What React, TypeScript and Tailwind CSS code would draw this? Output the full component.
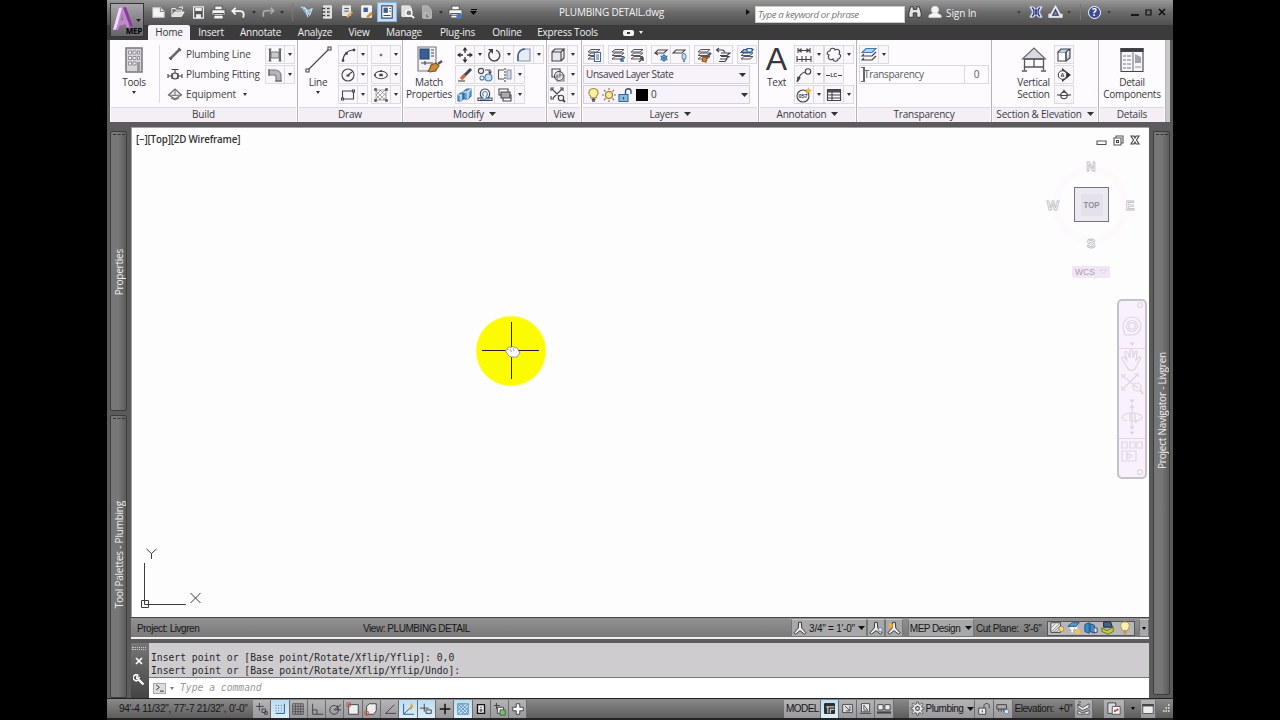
import React from "react";

type Kids = { children?: React.ReactNode };

function Ic({ s = 16, h, vb, children }: Kids & { s?: number; h?: number; vb?: string }) {
  return (
    <svg width={s} height={h ?? s} viewBox={vb ?? "0 0 16 16"} fill="none" stroke="#45434a" strokeWidth="1.1" className="block shrink-0">
      {children}
    </svg>
  );
}

function Caret({ big = false, color = "#333" }: { big?: boolean; color?: string }) {
  return (
    <svg width={big ? 7 : 4} height={big ? 4 : 3} viewBox="0 0 8 4" preserveAspectRatio="none" fill={color} className="block shrink-0">
      <path d="M0 0h8L4 4z" />
    </svg>
  );
}

/* ---------- ribbon icons ---------- */
const duct = <Ic><path d="M3 2v12M13 2v12" stroke="#666" strokeWidth="2" /><path d="M1.500 2h3M1.500 14h3M11.500 2h3M11.500 14h3" stroke="#666" /><path d="M4 5h8v6H4z" fill="#c9c9ce" stroke="#777" /></Ic>;
const elbow = <Ic><path d="M2 3h6c4 0 6 3 6 6v5H9v-4c0-1-1-2-2-2H2z" fill="#b5b4b9" stroke="#777" /><path d="M2 2v7M8 14h7" stroke="#666" /></Ic>;
const arc = <Ic><path d="M3 14C3 8 7 3 14 3" /><path d="M2 12.500h2v2H2zM5.500 5.500h2v2h-2zM13 2h2v2h-2z" fill="#444" strokeWidth=".5" /></Ic>;
const point = <Ic><path d="M7 7h2v2H7z" fill="#777" stroke="#777" strokeWidth=".5" /></Ic>;
const circle = <Ic><circle cx="8" cy="8" r="6" /><path d="M8 8l4-3M7 8h2v1H7z" /></Ic>;
const ellipse = <Ic><ellipse cx="8" cy="8" rx="6.300" ry="3.700" /><path d="M7 7.500h2v1H7zM7 4h2M1 8h2" strokeWidth="1.500" /></Ic>;
const rect = <Ic><path d="M2.500 4h11v8h-11z" /><path d="M1.500 11h2v2h-2zM12.500 3h2v2h-2z" fill="#fff" /></Ic>;
const hatch = <Ic><path d="M3 3h10v10H3zM3 8l5-5M3 12l9-9M6 13l7-7M10 13l3-3M3 4l9 9M3 8l5 5M7 3l6 6" strokeWidth=".6" stroke="#777" /><path d="M1.500 1.500h2v2h-2zM12.500 1.500h2v2h-2zM12.500 12.500h2v2h-2zM1.500 12.500h2v2h-2z" fill="#555" strokeWidth=".5" /></Ic>;
const move = <Ic><path d="M8 1v5M8 10v5M1 8h5M10 8h5" stroke="#333" strokeWidth="1.300" /><path d="M8 0L5.500 3.500h5zM8 16l-2.500-3.500h5zM0 8l3.500-2.500v5zM16 8l-3.500-2.500v5z" fill="#333" stroke="none" /></Ic>;
const rotate = <Ic><path d="M5 4a5.500 5.500 0 1 0 5-.8" strokeWidth="1.400" /><path d="M2 2h5v5z" fill="#444" stroke="none" /></Ic>;
const fillet = <Ic><path d="M2 14V9c0-4 3-7 7-7h5v12z" fill="#e6ebf5" stroke="#8d93a5" /><path d="M2 14V9c0-4 3-7 7-7" stroke="#3d5d94" strokeWidth="1.500" /></Ic>;
const erase = <Ic><path d="M14 2L7 9" stroke="#444" strokeWidth="3" /><path d="M8 8l-4 4" stroke="#cf6b42" strokeWidth="3.500" /><path d="M1 14h7" /></Ic>;
const copy = <Ic><circle cx="4" cy="4" r="2.600" /><circle cx="11.500" cy="10.500" r="3.500" fill="#c7ddf1" stroke="#3f79b0" /><circle cx="5" cy="11" r="2" stroke="#3f79b0" /><path d="M8 3h5v3M11.500 4.500L13 6.500l1.500-2" /></Ic>;
const mirror = <Ic><path d="M7 3H1.500v9H7" stroke="#555" /><path d="M10 3h4v9h-4z" fill="#c9d7e8" stroke="#8a96a8" /><path d="M8 1v14" strokeDasharray="2 1" /></Ic>;
const array3d = <Ic><path d="M1 8l3-2h3v5l-3 3H1zM6 5l4-3h4v7l-3 3H6z" fill="#70a8d4" stroke="#2d6c9e" /><path d="M6 5h5v7M11 5l3-3M1 8h3v6" stroke="#e6f5ff" /></Ic>;
const offset = <Ic><path d="M1 13.500h14V11h-4.500c4-3 2-9-2.500-9s-6.500 6-2.500 9H1z" stroke="#3c4a5a" /><path d="M3 12.300h5.500M8 12h5M6.800 9.500C4.500 7 6 4.500 8 4.500s3.500 2.500 1.200 5V12" stroke="#4186b3" /></Ic>;
const order = <Ic><path d="M2 2h9v6H2zM6 8h8v6H6z" fill="#fff" /><path d="M4 5h9v6H4z" fill="#aaa" /></Ic>;
const cube = <Ic><path d="M2 5h9v9H2zM2 5l3-3h9l-3 3M14 2v9l-3 3" fill="#e8e7eb" /></Ic>;
const overlap = <Ic><path d="M2 2h8v8H2z" /><circle cx="9" cy="9" r="4.500" fill="#dad9e066" /><path d="M7 8h7v6H7z" stroke="#777" /></Ic>;
const zoomExt = <Ic><path d="M2 2l8 8M12 2L3 11M1 4V1h3M10 1h3v3M1 9v3h3" /><circle cx="11" cy="11" r="2.700" fill="#eee" /><path d="M13 13l2 2" strokeWidth="2" /></Ic>;

function Stack({ x }: { x?: React.ReactNode }) {
  return (
    <Ic>
      <path d="M5 2.500h9l-3 2.500H2zM5 6h9l-3 2.500H2zM5 9.500h9l-3 2.500H2z" fill="#f4f3f7" stroke="#56545c" strokeWidth="1" />
      {x}
    </Ic>
  );
}
const lay1 = <Stack x={<><path d="M8.500 5.500h6v9h-6z" fill="#fff" stroke="#46689a" /><path d="M10 8h3M10 10h3M10 12h3" stroke="#46689a" /></>} />;
const lay2 = <Stack x={<path d="M15 10l-4 4M11 11v3h3" stroke="#3a6ea5" strokeWidth="1.400" />} />;
const lay3 = <Stack x={<path d="M10 15l4-4M14 14v-3h-3" stroke="#444" strokeWidth="1.400" />} />;
const freeze = <Ic><path d="M5 3h9l-3 3H2zM2 6l3 2" fill="#f4f3f7" /><path d="M11 7v8M7.500 9l7 4M14.500 9l-7 4" stroke="#3b78b5" strokeWidth="1.200" /><circle cx="11" cy="11" r="2.500" stroke="#3b78b5" /></Ic>;
const off = <Ic><path d="M4 3h9l-3 3H1z" fill="#f4f3f7" /><ellipse cx="12" cy="9.500" rx="2" ry="3" fill="#c6dcf3" stroke="#6a8ab5" /><path d="M12 12v3" stroke="#6a8ab5" strokeWidth="2" /></Ic>;
const layMatch = <Stack x={<><path d="M15 6l-5 5" stroke="#555" strokeWidth="2" /><path d="M7 10l4 1-1 4-4-1z" fill="#c98636" stroke="#9a5c17" /></>} />;
const layPrev = <Ic><path d="M6 6h9l-3 2.500H5M6 9.500h8l-3 2.500H5M12 12l-2 2.500H4M1 3h7l2 2M4 1L1.500 3 4 5" /></Ic>;
const layIso = <Stack x={<><path d="M5 2.500h9l-3 3H2z" fill="#8dbbe4" stroke="#315c8b" /><path d="M8 1.500h5v3.500H8z" fill="#dcebf8" stroke="#315c8b" /></>} />;
const dim = <Ic><path d="M2 1v5M14 1v5M2 3.500h12M1 9v6M6 9v6M10 9v6M15 9v6M1 12.500h14" /><path d="M3 3.500l2-1.500v3zM13 3.500L11 2v3z" fill="#444" /></Ic>;
const cloud = <Ic><path d="M4 4c0-4 5-3 5-1 3-2 6 1 4 4 3 1 1 5-1 5 0 3-5 3-5 0-3 2-6-1-4-4-3-1-2-4 1-4z" /></Ic>;
const leader = <Ic><path d="M2 14c1-5 3-8 7-9" /><circle cx="12" cy="4.500" r="2.700" /><path d="M1 15l1-5 2 1z" fill="#444" /></Ic>;
const labelCurve = (
  <Ic>
    <path d="M0 8.500h4M12 8.500h4" />
    <text x="4.500" y="10.300" fontSize="5" fill="#333" stroke="none" fontFamily="Liberation Sans, sans-serif" fontWeight="bold">LC</text>
  </Ic>
);
const keynote = (
  <Ic>
    <circle cx="7" cy="9" r="6" />
    <text x="2.500" y="11" fontSize="5.500" fill="#333" stroke="none" fontFamily="Liberation Sans, sans-serif" fontWeight="bold">057</text>
    <path d="M12.500 0l1 2.500L16 3l-2 1.500.5 2.500-2-1.500L10 6.500l.5-2.500L9 2.500l2.500-.3z" fill="#e8b441" stroke="none" />
  </Ic>
);
const table = <Ic><path d="M1.500 2.500h13v11h-13zM1.500 8h13M1.500 11h13M6 5v8.500" /><path d="M2 3h12v2H2z" fill="#555" /></Ic>;
const transp = <Ic><path d="M5 1.500h10l-4 4H1z" fill="#a8d3ef" stroke="#3f7ba4" /><path d="M3 7l-2 2h10l4-4M3 11l-2 2h10l4-4" stroke="#444" strokeWidth="1.200" /></Ic>;
const secCube = <Ic><path d="M2 5h8v9H2z" fill="#fff" /><path d="M2 5l3-3h9l-4 3M14 2v9l-4 3" fill="#b5d2ea" /><path d="M10 5V14" /></Ic>;
const secMark = <Ic><path d="M6 1l9 7-9 7V12h3V4H6z" fill="#333" stroke="none" /><circle cx="6.500" cy="8" r="4.200" fill="#fff" /><path d="M5 10l1.500-4L8 10M5.500 9h2" strokeWidth=".9" /></Ic>;
const elevMark = <Ic><path d="M1 8h14" /><path d="M4.500 8L8 3.500 11.500 8z" fill="#333" /><circle cx="8" cy="8.500" r="3.200" fill="#fff" /><path d="M5 8.500h6" /></Ic>;

function Cell({ children, w = "w-[20px]", split = false }: Kids & { w?: string; split?: boolean }) {
  return (
    <div className={`flex h-[19px] ${w} shrink-0 items-center justify-center border border-[#dedae1] bg-[#faf7fb] ${split ? "-ml-px" : ""}`}>
      {children}
    </div>
  );
}
function Drop() {
  return (
    <Cell w="w-[11px]" split>
      <Caret />
    </Cell>
  );
}
function Combo({ children }: Kids) {
  return (
    <div className="flex">
      <Cell>{children}</Cell>
      <Drop />
    </div>
  );
}
function Panel({ w, title, arrow, children }: Kids & { w: string; title: string; arrow?: boolean }) {
  return (
    <section className={`flex ${w} shrink-0 flex-col border-r border-[#b5b2b8] bg-[#fdfbfe]`}>
      <div className="flex h-[67px] pt-[5px]">{children}</div>
      <div className="mx-px flex h-[15px] items-center justify-center gap-[5px] whitespace-nowrap border-t border-[#ddd9e0] bg-[#f3eff5] pb-[2px] text-[10px] tracking-[-0.2px] text-[#3c393f]">
        <span>{title}</span>
        {arrow && <Caret big />}
      </div>
    </section>
  );
}
function Big({ icon, lines, arrow, w }: { icon: React.ReactNode; lines: string[]; arrow?: boolean; w: string }) {
  return (
    <div className={`flex ${w} shrink-0 flex-col items-center text-[10px] leading-[12px] tracking-[-0.25px] text-[#39363c]`}>
      <div className="flex h-[31px] items-center pb-[2px]">{icon}</div>
      {lines.map((l) => (
        <span key={l} className="whitespace-nowrap">{l}</span>
      ))}
      {arrow && <div className="pt-[3px]"><Caret /></div>}
    </div>
  );
}
function BuildRow({ icon, label, arrow }: { icon: React.ReactNode; label: string; arrow?: boolean }) {
  return (
    <div className="flex h-[20px] items-center gap-[3px] whitespace-nowrap text-[10px] tracking-[-0.12px] text-[#434046]">
      {icon}
      <span>{label}</span>
      {arrow && <span className="pl-1"><Caret /></span>}
    </div>
  );
}

function Ribbon() {
  const col = "flex flex-col gap-px";
  return (
    <div className="ml-[3px] flex h-[82px] w-[1060px] bg-[#fdfbfe]">
      <Panel w="w-[188px]" title="Build">
        <Big w="w-[48px]" arrow lines={["Tools"]} icon={
          <Ic s={18} h={26} vb="0 0 18 26"><path d="M1 1h16v24H1z" fill="#d5d4d9" stroke="#77757b" strokeWidth="1.500" /><path d="M3.500 4h3v3h-3zM8 4h3v3H8zM12.500 4h2v3h-2zM3.500 9.500h3v3h-3zM8 9.500h3v3H8zM12.500 9.500h2v3h-2zM3.500 15h3v3h-3zM8 15h3v3H8z" fill="#f8f8fa" stroke="#7c7a80" strokeWidth=".8" /><path d="M12 15h3v9h-3z" fill="#99979d" stroke="none" /></Ic>
        } />
        <div className="ml-px h-[58px] w-px bg-[#dcd8df]" />
        <div className="-mt-px ml-[7px] w-[98px]">
          <BuildRow label="Plumbing Line" icon={<Ic><path d="M3 13L13 3" stroke="#6a686e" strokeWidth="2.500" /><path d="M2 11.500l2.500 2.500M11.500 2l2.500 2.500" stroke="#555" /></Ic>} />
          <BuildRow label="Plumbing Fitting" icon={<Ic><path d="M1 10h14M1 8v4M15 8v4M8 4v4M4.500 3.500h7" /><circle cx="8" cy="10" r="3" fill="#eee" /><path d="M5 7v6M11 7v6" /></Ic>} />
          <BuildRow label="Equipment" arrow icon={<Ic><path d="M1.500 9L8 3l6.500 6-6.500 4z" fill="#eeedf1" stroke="#666" /><path d="M8 3v6.500M1.500 9l6.500.5 6.500-.5M4 12l4 2 4-2" stroke="#777" /></Ic>} />
        </div>
        <div className={col}><Combo>{duct}</Combo><Combo>{elbow}</Combo></div>
      </Panel>
      <Panel w="w-[105px]" title="Draw">
        <Big w="w-[40px]" arrow lines={["Line"]} icon={
          <Ic s={27} h={27} vb="0 0 27 27"><path d="M2.500 24.500L24.500 2.500" /><path d="M1 23h3v3H1zM23 1h3v3h-3z" fill="#fff" /></Ic>
        } />
        <div className={col}><Combo>{arc}</Combo><Combo>{circle}</Combo><Combo>{rect}</Combo></div>
        <div className={`ml-[3px] ${col}`}><Combo>{point}</Combo><Combo>{ellipse}</Combo><Combo>{hatch}</Combo></div>
      </Panel>
      <Panel w="w-[144px]" title="Modify" arrow>
        <Big w="w-[52px]" lines={["Match", "Properties"]} icon={
          <Ic s={27} h={27} vb="0 0 27 27"><path d="M2 1h18v24H2z" fill="#f2f2f6" stroke="#77757b" /><path d="M4 3h9v10H4z" fill="#3b5f92" stroke="#27456f" /><path d="M15 4h3M15 7h3M15 10h3M5 17h12M9 15v4" /><path d="M26 15l-4 3" stroke="#555" strokeWidth="2.500" /><path d="M15 19l5-2 3 3-4 5-5 1-2-1c2-1 2-3 3-6z" fill="#c88a3e" stroke="#8b5317" /></Ic>
        } />
        <div className={col}>
          <div className="flex"><Cell>{move}</Cell><Drop /><Cell split>{rotate}</Cell><Drop /><Cell split w="w-[21px]">{fillet}</Cell><Drop /></div>
          <div className="flex"><Cell>{erase}</Cell><Cell w="w-[21px]" split>{copy}</Cell><Cell w="w-[21px]" split>{mirror}</Cell><Drop /></div>
          <div className="flex"><Cell>{array3d}</Cell><Cell w="w-[21px]" split>{offset}</Cell><Cell w="w-[21px]" split>{order}</Cell><Drop /></div>
        </div>
      </Panel>
      <Panel w="w-[35px]" title="View">
        <div className={`ml-px ${col}`}><Combo>{cube}</Combo><Combo>{overlap}</Combo><Combo>{zoomExt}</Combo></div>
      </Panel>
      <Panel w="w-[177px]" title="Layers" arrow>
        <div className={`ml-px ${col}`}>
          <div className="flex gap-[4px]">
            <Cell w="w-[21px]">{lay1}</Cell>
            <div className="flex"><Cell>{lay2}</Cell><Cell split>{lay3}</Cell></div>
            <div className="flex"><Cell>{freeze}</Cell><Cell split>{off}</Cell></div>
            <div className="flex"><Cell>{layMatch}</Cell><Cell split>{layPrev}</Cell></div>
            <Cell>{layIso}</Cell>
          </div>
          <div className="flex h-[19px] w-[167px] items-center justify-between border border-[#d5d1d9] bg-[#f8f2fa] pl-[2px] pr-[3px] text-[10px] tracking-[-0.4px] text-[#3c393f]">
            <span>Unsaved Layer State</span><Caret big />
          </div>
          <div className="flex h-[19px] w-[167px] items-center border border-[#d5d1d9] bg-[#f8f2fa] pl-[2px] pr-px text-[10px] text-[#3c393f]">
            <Ic s={15}><path d="M5 10C1 6 4 1.500 8 1.500S15 6 11 10v1.500H5z" fill="#fcefa0" stroke="#a38b42" /><path d="M6 13h4M6.500 15h3" strokeWidth="1.500" /></Ic>
            <Ic s={16}><circle cx="8" cy="8" r="3.500" fill="#fae79a" stroke="#927a34" /><path d="M8 1v2M8 13v2M1 8h2M13 8h2M3 3l1.500 1.500M11.500 11.500L13 13M13 3l-1.500 1.500M3 13l1.500-1.500" stroke="#8a743a" /></Ic>
            <Ic s={16}><path d="M2 7.500h9v7H2z" fill="#86bfe3" stroke="#2e6b98" /><path d="M8.500 7V4c0-3 5.500-3 5.500 0v3M6.500 10v2.500" stroke="#2e4f68" strokeWidth="1.300" /></Ic>
            <div className="ml-[3px] h-[12px] w-[12px] bg-black" />
            <span className="ml-[3px] flex-1">0</span><Caret big />
          </div>
        </div>
      </Panel>
      <Panel w="w-[98px]" title="Annotation" arrow>
        <div className="flex w-[35px] shrink-0 flex-col items-center text-[#39363c]">
          <span className="h-[32px] font-['Liberation_Sans',sans-serif] text-[32px] leading-[29px]">A</span>
          <span className="h-[12px] text-[10px] leading-[11px] tracking-[-0.25px]">Text</span>
        </div>
        <div className={col}>
          <div className="flex"><Combo>{dim}</Combo><Combo>{cloud}</Combo></div>
          <div className="flex"><Combo>{leader}</Combo><Cell>{labelCurve}</Cell></div>
          <div className="flex"><Combo>{keynote}</Combo><Combo>{table}</Combo></div>
        </div>
      </Panel>
      <Panel w="w-[135px]" title="Transparency">
        <div className={`ml-[2px] ${col}`}>
          <Combo>{transp}</Combo>
          <div className="flex h-[19px] w-[130px] items-center border border-[#dcd8df] text-[10px] tracking-[-0.3px] text-[#5a575d]">
            <div className="ml-px h-[15px] w-[4px] border-y border-r-2 border-[#666]" />
            <span className="-ml-px flex-1">Transparency</span>
            <div className="flex h-full w-[24px] items-center justify-center border-l border-[#dcd8df]">0</div>
          </div>
        </div>
      </Panel>
      <Panel w="w-[107px]" title="Section &amp; Elevation" arrow>
        <div className="w-[21px]" />
        <Big w="w-[41px]" lines={["Vertical", "Section"]} icon={
          <Ic s={26} h={27} vb="0 0 26 27"><path d="M1.500 13L13 2l11.500 11z" fill="#d9dae1" stroke="#666" /><path d="M3.500 13v11M22.500 13v11M3.500 21h19M13 13v8M1 25h5M20 25h5M3.500 13h19" stroke="#555" strokeWidth="1.300" /></Ic>
        } />
        <div className={col}><Cell>{secCube}</Cell><Cell>{secMark}</Cell><Cell>{elevMark}</Cell></div>
      </Panel>
      <Panel w="w-[67px]" title="Details">
        <Big w="w-[66px]" lines={["Detail", "Components"]} icon={
          <Ic s={24} h={26} vb="0 0 24 26"><path d="M1 1.500h22v23H1z" fill="#f6f5f9" /><path d="M1 1.500h22v3H1z" fill="#3d3b42" /><path d="M13 4v20M3 9h3M7 9h4M3 13h3M7 13h4M3 17h3M7 17h4M3 21h3M7 21h4" stroke="#777" /><path d="M15 7l6 3v6h-6z" fill="#a3a2aa" stroke="none" /><path d="M15 20h6" stroke="#999" /></Ic>
        } />
      </Panel>
      <div className="w-[4px] bg-[#c9c7cb]" />
    </div>
  );
}

/* ---------- title bar ---------- */
function Slot({ w, children }: Kids & { w: string }) {
  return <div className={`flex h-full ${w} shrink-0 items-center justify-center`}>{children}</div>;
}
const W = "#f5f5f5";
function TitleBar() {
  return (
    <div className="flex h-[22px] items-center pl-[41px]">
      <Slot w="w-[20px]"><Ic s={15}><path d="M2 3h8l4 4v6H2z" fill={W} stroke="#ccc" /><path d="M10 3v4h4" stroke="#888" /></Ic></Slot>
      <Slot w="w-[20px]"><Ic s={14}><path d="M1 13V4h4l1 2h6v2" stroke="#eee" /><path d="M1 13l3-5h11l-3 5z" fill="#ddd" stroke="#eee" /><path d="M9 3l4-1v3" stroke="#eee" /></Ic></Slot>
      <Slot w="w-[20px]"><Ic s={13}><path d="M2 1h12v14H2z" fill="#555" stroke="#eee" strokeWidth="1.500" /><path d="M4 2h8v4H4zM5 10h6v5H5z" fill="#eee" stroke="none" /></Ic></Slot>
      <Slot w="w-[20px]"><Ic s={15}><path d="M4 1h8v4H4zM1 5h14v6H1zM3 9h10v6H3z" fill={W} stroke="#555" /></Ic></Slot>
      <Slot w="w-[20px]"><Ic s={15}><path d="M5 3L1.500 6.500 5 10M2 6.500h8c4 0 4 4 3 7" stroke={W} strokeWidth="2" /></Ic></Slot>
      <Slot w="w-[12px]"><Caret color="#333" /></Slot>
      <Slot w="w-[16px]"><Ic s={14}><path d="M11 3l3.500 3.500L11 10M14 6.500H6c-4 0-4 4-3 7" stroke="#a9a9a9" strokeWidth="2" /></Ic></Slot>
      <Slot w="w-[12px]"><Caret color="#333" /></Slot>
      <Slot w="w-[9px]"><div className="h-[18px] w-px bg-[#777]" /></Slot>
      <Slot w="w-[20px]"><Ic s={14}><path d="M1 2l6 3 2 9M4 2l5 4M8 7l6-3-3 8z" fill="#86b3d2" stroke="#d6e9f6" /></Ic></Slot>
      <Slot w="w-[20px]"><Ic s={14}><path d="M4 1h9v14H4z" fill="#ddd" stroke="#eee" /><path d="M2 4h4M2 8h4M2 12h4M8 4h3M8 8h3M8 12h3" stroke="#444" strokeWidth="1.500" /></Ic></Slot>
      <Slot w="w-[20px]"><Ic s={14}><path d="M3 1h9v11H3z" fill="#ddd" stroke="#eee" /><path d="M5 4h5M5 7h5" stroke="#555" /><path d="M14 8l-6 6" stroke="#e0a44c" strokeWidth="2.500" /></Ic></Slot>
      <Slot w="w-[20px]"><Ic s={14}><path d="M2 1h11v13H2z" fill="#eee" stroke="#fff" /><path d="M4 3h5v5H4z" fill="#3f608f" stroke="none" /><path d="M14 9l-6 5" stroke="#cc8f3f" strokeWidth="3" /></Ic></Slot>
      <div className="flex h-[20px] w-[20px] shrink-0 items-center justify-center border border-[#86b4e4] bg-[#c6def6]"><Ic s={14}><path d="M2 1h12v14H2z" fill="#fff" stroke="#334a6e" strokeWidth="1.300" /><path d="M4 3h5v6H4z" fill="#3f608f" stroke="none" /><path d="M10.500 4h2M10.500 7h2M4 12h8" /></Ic></div>
      <Slot w="w-[21px]"><Ic s={14}><path d="M1 1h9l2 3v9H1z" fill="#ddd" stroke="#eee" /><circle cx="9" cy="9" r="3.500" fill="#777" stroke="#fff" strokeWidth="1.500" /><path d="M12 12l3 3" stroke="#fff" strokeWidth="2" /></Ic></Slot>
      <Slot w="w-[18px]"><Ic s={14}><path d="M3 1h6l4 5v9H3z" fill="#aaa" stroke="#bbb" /><path d="M6 15V8l6 7z" fill="#777" stroke="#ccc" /></Ic></Slot>
      <Slot w="w-[10px]"><Caret color="#333" /></Slot>
      <Slot w="w-[18px]"><Ic s={15}><path d="M4 1h8v4H4zM1 5h14v6H1zM3 9h10v5H3z" fill={W} stroke="#555" /><circle cx="12" cy="12" r="3" fill="#4b78b5" stroke="none" /></Ic></Slot>
      <Slot w="w-[19px]"><div className="flex flex-col items-center gap-px"><div className="h-px w-[6px] bg-black" /><Caret big color="#000" /></div></Slot>
      <div className="w-[257px] shrink-0 text-center text-[10px] tracking-[-0.2px] text-[#f4f4f4]">PLUMBING DETAIL.dwg</div>
      <Slot w="w-[15px]"><svg width="4" height="6" viewBox="0 0 4 6"><path d="M0 0v6l4-3z" fill="#111" /></svg></Slot>
      <div className="mt-[4px] h-[17px] w-[150px] shrink-0 border border-[#ccc] bg-white pl-[2px] text-[9.7px] italic leading-[15px] tracking-[-0.38px] text-[#77747a]">Type a keyword or phrase</div>
      <Slot w="w-[20px]"><Ic s={14}><path d="M3 2h3v3h4V2h3l2 7v5h-5V9H6v5H1V9z" fill="#e2e2e2" stroke="#333" /></Ic></Slot>
      <Slot w="w-[20px]"><Ic s={14}><circle cx="8" cy="5.500" r="4" fill={W} stroke="#ddd" /><path d="M6 9h4l5 3v2H1v-2z" fill={W} stroke="#ddd" /></Ic></Slot>
      <span className="w-[66px] shrink-0 whitespace-nowrap pl-px pt-[3px] text-[10px] tracking-[-0.1px] text-[#f4f4f4]">Sign In</span>
      <Slot w="w-[15px]"><Caret color="#444" /></Slot>
      <Slot w="w-[20px]"><Ic s={14}><path d="M1 2h4l3 3 3-3h4l-3 6 3 6h-4l-3-3-3 3H1l3-6z" fill="#e1e7f7" stroke="#c3cbe6" /><path d="M3.500 3c3 2 3 8 0 10M12.500 3c-3 2-3 8 0 10M7 5l2 6M9 5l-2 6" stroke="#2e3b82" strokeWidth="1.500" /></Ic></Slot>
      <Slot w="w-[18px]"><Ic s={15}><path d="M8 1l5 9h2v3H1v-3h2z" fill="#d9def1" stroke="#eee" /><path d="M8 5l3 6H5z" fill="#8186a8" stroke="#35395c" /></Ic></Slot>
      <Slot w="w-[10px]"><Caret color="#444" /></Slot>
      <Slot w="w-[13px]"><div className="h-[16px] w-px bg-[#777]" /></Slot>
      <div className="mx-px h-[13px] w-[13px] shrink-0 rounded-full border border-white bg-[#3d4a92] text-center text-[10px] font-bold leading-[11px] text-white">?</div>
      <Slot w="w-[14px]"><Caret color="#444" /></Slot>
      <div className="ml-[14px] flex items-center gap-[6px]">
        <Ic s={9} vb="0 0 9 9"><path d="M1 7h8" stroke="#111" strokeWidth="1.800" /></Ic>
        <Ic s={7} vb="0 0 7 7"><path d="M1 1h5v5H1z" stroke="#111" strokeWidth="1.200" /></Ic>
        <Ic s={8} vb="0 0 8 8"><path d="M1 1l6 6M7 1L1 7" stroke="#111" strokeWidth="1.600" /></Ic>
      </div>
    </div>
  );
}

const tabs: [string, string][] = [["Insert", "w-[42px]"], ["Annotate", "w-[57px]"], ["Analyze", "w-[52px]"], ["View", "w-[36px]"], ["Manage", "w-[54px]"], ["Plug-ins", "w-[53px]"], ["Online", "w-[46px]"], ["Express Tools", "w-[75px]"]];

function Header() {
  return (
    <header className="relative h-[40px] bg-gradient-to-b from-[#999] via-[#6a6a6a] to-[#505050] bg-[length:100%_25px] bg-no-repeat pt-px">
      <TitleBar />
      <div className="mt-[2px] flex h-[15px] bg-[#3c3b3c] pl-[41px] text-[10px] leading-[15px] tracking-[-0.22px] text-[#f1eff2]">
        <div className="h-[15px] w-[42px] rounded-t-[2px] bg-[#f7f4f9] text-center text-[#333]">Home</div>
        {tabs.map(([t, w]) => (
          <div key={t} className={`${w} whitespace-nowrap text-center`}>{t}</div>
        ))}
        <div className="flex items-center gap-[5px] pl-[18px]">
          <div className="flex h-[6px] w-[11px] items-center justify-center rounded-[2px] bg-[#f2f2f2]"><div className="h-[2px] w-[3px] bg-[#333]" /></div>
          <Caret color="#eee" />
        </div>
      </div>
      <div className="absolute left-[3px] top-[3px] h-[34px] w-[34px] border border-[#353535] bg-gradient-to-b from-[#a9a6ab] to-[#66646a]">
        <svg width="32" height="32" viewBox="0 0 32 32">
          <path d="M2 26L8 4l7-1 7 19-6 2-1.500-4-6 2L7 26zM9.500 17l3.500-1.300-2-7z" fill="#c384d0" fillRule="evenodd" />
          <path d="M8 4l3-.5L7 19l-2 6-3 1z" fill="#f3dcf7" />
          <path d="M12 3.500l3-.5 7 19-3 1z" fill="#853f98" />
          <path d="M25 15h5l-2.500 3z" fill="#222" />
        </svg>
        <span className="absolute bottom-px right-px text-[8px] font-bold leading-[8px] tracking-[-0.3px] text-black">MEP</span>
      </div>
    </header>
  );
}

/* ---------- palettes ---------- */
function Palette({ label, h, pos }: { label: string; h: string; pos: string }) {
  return (
    <div className={`relative flex ${h} w-[17px] flex-col items-center rounded-[2px] border border-[#3c3c3c] bg-gradient-to-r from-[#777] via-[#777] to-[#5c5c5c]`}>
      <div className="mt-px h-[2px] w-[12px] border-b border-dashed border-[#333]" />
      <div className={`${pos} ml-[2px] rotate-180 whitespace-nowrap text-[10px] leading-[15px] tracking-[-0.22px] text-[#eee] [writing-mode:vertical-rl]`}>{label}</div>
    </div>
  );
}

/* ---------- view cube and navigation bar ---------- */
function Compass() {
  return (
    <svg width="96" height="130" viewBox="0 0 96 130" fontFamily="Liberation Sans, sans-serif" textAnchor="middle">
      <circle cx="48" cy="49" r="35" fill="none" stroke="#fdf9fd" strokeWidth="7" />
      <g fontSize="13" fontWeight="bold" fill="#fff" stroke="#bfbcc2" strokeWidth=".8">
        <text x="48" y="15">N</text><text x="10" y="53.500">W</text><text x="87" y="53.500">E</text><text x="48" y="92">S</text>
      </g>
      <rect x="31.500" y="31.500" width="34" height="34" fill="#ece9f2" stroke="#77747c" />
      <rect x="38" y="38" width="22" height="22" fill="#e4e1eb" />
      <text x="48.500" y="51.800" fontSize="9" fontWeight="bold" fill="#918e9a" textLength="16" lengthAdjust="spacingAndGlyphs">TOP</text>
      <rect x="29" y="110" width="38" height="12" rx="2" fill="#f0e6f5" />
      <text x="42" y="119" fontSize="8.500" fill="#a6a0ad" textLength="20" lengthAdjust="spacingAndGlyphs">WCS</text>
      <path d="M57 114h7l-3.500 3z" fill="#f7f0fa" stroke="#d4ccd9" strokeWidth=".8" />
    </svg>
  );
}
function NavBar() {
  return (
    <div className="h-[180px] w-[30px] rounded-[5px] border-2 border-[#c6c2c9] bg-[#f9f1fb]">
      <svg width="26" height="176" viewBox="0 0 26 176" fill="none" stroke="#e0d5e3" strokeWidth="1.200">
        <circle cx="21" cy="4" r="2.500" /><circle cx="21" cy="171" r="2.500" />
        <path d="M4 25a9 9 0 1 1 9 9H6c0-2-2-5-2-9z" /><circle cx="13" cy="25" r="5.500" /><path d="M10 22h6v6h-6z" />
        <path d="M0 47.500h26M0 137.500h26" stroke="#e4d9e8" />
        <path d="M11.500 42h3l-1.500 2zM11.500 99h3l-1.500 2zM11.500 131h3l-1.500 2z" fill="#d2c5d6" />
        <path d="M8 66l-5-8c-1-2 1-3 3-1l2 2-2-7c0-2 2-2 3 0l2 5 0-7c0-2 2-2 3 0v7l2-6c1-1 3-1 2 1l-1 7 3-3c2-1 2 1 1 2l-4 8c-2 5-8 4-9 0z" />
        <path d="M4 75l15 12M18 74L4 88M3 77v-3h4M15 73h4v3M3 85v4h4" /><circle cx="18" cy="86" r="4" /><path d="M21 89l3 4" strokeWidth="2" />
        <path d="M13 105v22M11 107l2-3 2 3M11 125l2 3 2-3M8 120c-9-3-4-8 5-8s15 5 5 8M16 118l2 2-2 2M11 112h5v8h-5z" />
        <path d="M3 141h5v6H3zM11 141h5v6h-5zM18 141h5v6h-5zM3 150h14v10H3zM8 152l5 3-5 3z" />
      </svg>
    </div>
  );
}

function Canvas() {
  return (
    <div className="relative h-[489px] bg-[#fefdfe]">
      <div className="flex justify-between pl-[4px] pr-[9px] pt-[5px]">
        <span className="text-[9.8px] font-semibold leading-[14px] tracking-[-0.18px] text-[#333]">[−][Top][2D Wireframe]</span>
        <div className="flex items-center gap-[6px]">
          <Ic s={11} vb="0 0 11 11"><path d="M1 6h9v3.500H1z" fill="#fff" stroke="#555" /></Ic>
          <Ic s={11} vb="0 0 11 11"><path d="M3 1h7v7H8V3H3zM1 3h7v7H1z" fill="#fff" stroke="#555" /><path d="M3.500 5.500h2v2h-2z" /></Ic>
          <Ic s={10} vb="0 0 10 10"><path d="M1 1h3l1 2 1-2h3L6.500 5 9 9H6L5 7 4 9H1l2.500-4z" fill="#fff" stroke="#444" /></Ic>
        </div>
      </div>
      <div className="absolute left-[911px] top-[28px]"><Compass /></div>
      <div className="absolute left-[985px] top-[171px]"><NavBar /></div>
      <svg className="absolute left-[343px] top-[187px]" width="72" height="72" viewBox="0 0 72 72">
        <circle cx="36" cy="36" r="35" fill="#fdfb00" stroke="#fdfb8c" />
        <path d="M36.500 7v57M7 35.500h57" stroke="#222" />
        <path d="M34 41l-3-4c-1-2 1-3 2-2-1-3 1-4 3-2 0-2 3-2 4 0 2-1 3 0 3 2l2 3-3 4h-6z" fill="#fff" stroke="#8c8c8c" strokeWidth=".9" />
        <path d="M35 34l2 3M38 33l1 3" stroke="#777" strokeWidth=".7" />
      </svg>
      <svg className="absolute left-[6px] top-[418px]" width="66" height="66" viewBox="0 0 66 66" fill="none" stroke="#3c3c3c">
        <path d="M6.500 17v41.500H48M3.500 54.500h7v7h-7zM8.500 3l5 4.500 5-4.500M13.500 7.500V13M52.500 47l10 10M62.500 47l-10 10" />
      </svg>
    </div>
  );
}

const annotA = <path d="M6.500 1.500h3L10 8l5 5.500-2 1.500-5-4-5 4-2-1.500L6 8z" fill="#eee" stroke="#333" />;
function Btn({ w, children }: Kids & { w: string }) {
  return <div className={`flex h-[18px] ${w} shrink-0 items-center justify-center whitespace-nowrap border border-[#777] border-t-[#c5c5c5] bg-[#a8a7a9]`}>{children}</div>;
}

function DrawingStatus() {
  return (
    <div className="flex h-[20px] w-[1018px] items-center border-t border-[#444] bg-gradient-to-b from-[#939293] to-[#7a797a] pt-px font-['Liberation_Sans',sans-serif] text-[10px] tracking-[-0.45px] text-[#171717]">
      <span className="w-[226px] shrink-0 pl-[6px] tracking-[-0.45px]">Project: Livgren</span>
      <span className="w-[434px] shrink-0 pl-[6px]">View: PLUMBING DETAIL</span>
      <Btn w="w-[76px]"><Ic s={14}>{annotA}</Ic><span className="pl-[2px] pr-[3px] tracking-[-0.25px]">3/4" = 1'-0"</span><Caret big color="#111" /></Btn>
      <Btn w="w-[18px]"><Ic s={14}>{annotA}<circle cx="13" cy="10" r="2.500" fill="#d4e4f6" stroke="#6680a0" /></Ic></Btn>
      <Btn w="w-[18px]"><Ic s={14}>{annotA}<path d="M3 1l2 3 3-1-2 3 1 3-3-2-3 1 1-3z" fill="#e7b13f" stroke="none" /></Ic></Btn>
      <div className="w-[5px]" />
      <Btn w="w-[66px]"><span className="pr-[5px] tracking-[-0.5px]">MEP Design</span><Caret big color="#111" /></Btn>
      <span className="w-[73px] shrink-0 whitespace-pre pl-[2px] tracking-[-0.4px]">Cut Plane:  3'-6"</span>
      <div className="flex h-[15px] w-[88px] shrink-0 items-center justify-around border border-[#555] bg-[#b7b6b8]">
        <Ic s={14}><path d="M1 2h11v11H1z" fill="#eee" /><path d="M2 12L11 3M4 13l8-8M2 7l4-4M7 13l5-5" strokeWidth=".7" /><circle cx="13" cy="9" r="3" fill="#f2dc7f" stroke="#a88a34" /></Ic>
        <Ic s={14}><path d="M1 6l5-4h8l-4 4z" fill="#5e9dd4" stroke="#23598d" /><path d="M3 8h9M6 7v6" stroke="#fff" strokeWidth="2" /><circle cx="12" cy="12" r="3" fill="#f0c45c" stroke="none" /></Ic>
        <Ic s={14}><path d="M1 4l5-2v12l-5-2zM7 3l5 2v9l-5-2z" fill="#3f8acb" stroke="#1f5386" /><path d="M12 8h3v5h-3" fill="#eee" /></Ic>
        <Ic s={14}><path d="M3 1h8l2 6H3z" fill="#45618e" stroke="#223" /><path d="M1 8l6 3 7-4v5l-6 3-7-3z" fill="#c2cf35" stroke="#66721d" /></Ic>
        <Ic s={14}><path d="M5 10C1 5 4 1 8 1s7 4 3 9v1H5z" fill="#fff1b4" stroke="#b3954f" /><path d="M8 11v4" stroke="#c3954f" strokeWidth="3" /></Ic>
      </div>
      <div className="ml-[4px]"><Btn w="w-[10px]"><Caret color="#000" /></Btn></div>
    </div>
  );
}

function Command() {
  return (
    <div className="flex h-[55px]">
      <div className="flex w-[18px] flex-col items-center bg-gradient-to-b from-[#777] to-[#444] pr-[2px]">
        <div className="mt-[4px] h-[3px] w-[14px] border-y border-dotted border-[#ccc]" />
        <div className="mt-[7px]"><Ic s={8} vb="0 0 8 8"><path d="M1 1l6 6M7 1L1 7" stroke="#fff" strokeWidth="1.700" /></Ic></div>
        <div className="mt-[9px]"><Ic s={12}><path d="M7 7l7 7" stroke="#fff" strokeWidth="3" /><path d="M7 2a4 4 0 1 0 0 6M7 2L5 4v2h2l2-2" stroke="#fff" strokeWidth="2" /></Ic></div>
      </div>
      <div className="flex flex-1 flex-col bg-[#cecccf] font-['DejaVu_Sans_Mono','Liberation_Mono',monospace] text-[#27272b]">
        <div className="h-[35px] whitespace-pre border-b border-[#777] pl-[2px] pt-[9px] text-[9.7px] leading-[12.5px]">
          <div>Insert point or [Base point/Rotate/Xflip/Yflip]: 0,0</div>
          <div>Insert point or [Base point/Rotate/Xflip/Yflip/Undo]:</div>
        </div>
        <div className="flex flex-1 items-center bg-white pl-[4px] text-[#99969c]">
          <div className="mr-[4px] flex h-[11px] w-[13px] items-center justify-center border border-[#aaa] bg-[#ddd]"><Ic s={10}><path d="M2 3l5 4-5 4M8 13h6" stroke="#334" strokeWidth="1.600" /></Ic></div>
          <Caret color="#777" />
          <span className="pl-[6px] text-[9.7px] italic">Type a command</span>
        </div>
      </div>
    </div>
  );
}

const toggles: [React.ReactNode, boolean][] = [
  [<path d="M5 1v9M1 5h9M8 8h4v4H8z M11 11h3v3h-3z" />, false],
  [<path d="M3 4h1M6 4h1M9 4h1M3 7h1M6 7h1M9 7h1M3 10h1M6 10h1M9 10h1M3 13h10V2" stroke="#285a88" />, true],
  [<path d="M2 2h12v12H2zM5 2v12M8 2v12M11 2v12M2 5h12M2 8h12M2 11h12" strokeWidth=".9" />, false],
  [<path d="M3 2v12h12M3 9h5v5" />, false],
  [<><circle cx="7" cy="9" r="5" /><path d="M7 9l8-6M7 9h8M11 4v5" /></>, false],
  [<><path d="M3 3h11v11H3z" fill="#eee" /><path d="M1 1h4v4H1z" stroke="#c55a42" /></>, false],
  [<><path d="M3 5l3-3h8v8l-3 4H3z" fill="#eee" /><path d="M1 11h4v4H1z" stroke="#c55a42" /></>, false],
  [<path d="M13 3L3 13h12" />, false],
  [<><path d="M3 2v12h12M3 14l7-7" stroke="#235f90" /><path d="M12 1l2 4-3 5-1-4z" fill="#e3a33a" stroke="none" /></>, true],
  [<path d="M6 2v9M1 7h10M8 9h6v4H8z" />, true],
  [<path d="M8 2v12M2 8h12" stroke="#111" strokeWidth="1.700" />, false],
  [<path d="M2 2h12v12H2zM2 6l4-4M2 10l8-8M2 14L14 2M6 14l8-8M10 14l4-4M2 2l12 12M6 2l8 8M2 6l8 8" stroke="#5289b8" strokeWidth="1" />, true],
  [<><path d="M4 3h8v10H4z" fill="#eee" stroke="#111" strokeWidth="1.500" /><path d="M7 6h2M7 8.500h2v2H7z" /></>, false],
  [<><path d="M4 1v7M1 4h7" /><path d="M5 6h7v7H5z" fill="#eee" /><path d="M8 9h6v6H8z" fill="#8bb37b" stroke="#3d6c36" /></>, false],
  [<path d="M6 2h4v4h4v4h-4v4H6v-4H2V6h4z" fill="#fff" stroke="#444" />, false],
];

function SBtn({ w, on, children }: Kids & { w: string; on?: boolean }) {
  return (
    <div className={`flex h-[18px] ${w} shrink-0 items-center justify-center border-r border-[#6c6b6d] ${on ? "bg-gradient-to-b from-[#bcdcf0] to-[#dceffa]" : "bg-gradient-to-b from-[#b4b3b5] to-[#9a999b]"}`}>
      {children}
    </div>
  );
}

function AppStatus() {
  return (
    <footer className="flex h-[20px] items-center border-t border-[#222] bg-gradient-to-b from-[#8b8a8b] to-[#5e5d5e] pl-[2px] font-['Liberation_Sans',sans-serif] text-[10px] text-[#171717]">
      <div className="w-[144px] shrink-0 whitespace-nowrap pl-[10px] tracking-[-0.25px]">94'-4 11/32", 77'-7 21/32", 0'-0"</div>
      {toggles.map(([icon, on], i) => (
        <SBtn key={i} w="w-[18.3px]" on={on}><Ic s={14}>{icon}</Ic></SBtn>
      ))}
      <div className="w-[257px]" />
      <SBtn w="w-[37px]"><span className="tracking-[-0.55px]">MODEL</span></SBtn>
      <SBtn w="w-[18px]" on><Ic s={13}><path d="M2 2h12v12H2z" fill="#333" stroke="#111" /><path d="M4 6h10M6 6v8M9 9h5M9 9v5" stroke="#fff" /></Ic></SBtn>
      <SBtn w="w-[18px]"><Ic s={13}><path d="M2 3h12v10H2zM5 5l6 6M11 5v6H6" fill="#ddd" /></Ic></SBtn>
      <SBtn w="w-[18px]"><Ic s={13}><path d="M3 2h10v10H3z" fill="#eee" /><path d="M1 14h14M6 4v6h5z" /></Ic></SBtn>
      <SBtn w="w-[19px]"><Ic s={14}><path d="M1 3h6v6H1zM9 3h6v6H9z" fill="#eee" /><path d="M0 12h16" strokeWidth="2.500" /></Ic></SBtn>
      <div className="w-[15px]" />
      <SBtn w="w-[66px]">
        <Ic s={15}><path d="M7 1h2v2l2 .7L12.500 2 14 3.500 12.300 5l.7 2h2v2h-2l-.7 2 1.700 1.500-1.500 1.500-1.500-1.700-2 .7v2H7v-2l-2-.7L3.500 14 2 12.500 3.700 11 3 9H1V7h2l.7-2L2 3.500 3.500 2 5 3.700 7 3z" fill="#e5e5e5" strokeWidth=".8" /><circle cx="8" cy="8" r="2" /></Ic>
        <span className="pl-px pr-[4px] tracking-[-0.5px]">Plumbing</span><Caret big color="#111" />
      </SBtn>
      <SBtn w="w-[19px]"><Ic s={14}><path d="M2 7h8v7H2z" fill="#eee" /><path d="M8 7V4c0-3 6-3 6 0v3M6 9v3" /></Ic></SBtn>
      <SBtn w="w-[19px]"><Ic s={14}><path d="M1 3h11v5H1zM3 8v3M6 8v3M9 8v3" /><circle cx="12" cy="11" r="2.500" fill="#dceaf6" stroke="#69839c" /></Ic></SBtn>
      <span className="w-[62px] shrink-0 whitespace-pre pl-px text-[10px] tracking-[-0.45px]">Elevation:  +0"</span>
      <SBtn w="w-[18px]"><Ic s={15}><path d="M2 4l5 3 7-4v4l-7 3-5-3zM2 10l5 3 7-3v4H2zM2 1h3L2 4h3" fill="#eee" strokeWidth=".9" /></Ic></SBtn>
      <div className="w-[11px]" />
      <SBtn w="w-[21px]"><Ic s={14}><path d="M1 1h9v12H1z" fill="#ddd" /><path d="M6 5h9v9H6z" fill="#fff" stroke="#555" /><path d="M8 11l5-3" stroke="#d04545" strokeWidth="2" /></Ic></SBtn>
      <Slot w="w-[16px]"><Caret color="#000" /></Slot>
      <SBtn w="w-[15px]"><Ic s={12}><path d="M1 2h14v12H1z" fill="#eee" /><path d="M1 2h14v2H1z" fill="#444" /></Ic></SBtn>
      <div className="ml-[5px]"><Ic s={9} vb="0 0 9 9"><path d="M7 1h1.500M4.500 4H6M7 4h1.500M2 7h1.500M4.500 7H6M7 7h1.500" stroke="#eee" strokeWidth="1.500" /></Ic></div>
    </footer>
  );
}

export default function App() {
  return (
    <div className="flex h-[720px] w-[1280px] justify-center overflow-hidden bg-black font-['Open_Sans','Noto_Sans',sans-serif]">
      <div className="flex h-[720px] w-[1066px] flex-col bg-[#5c5b5c]">
        <Header />
        <Ribbon />
        <div className="flex h-[576px]">
          <div className="flex w-[24px] shrink-0 flex-col gap-[4px] pl-[3px] pt-[9px]">
            <Palette label="Properties" h="h-[280px]" pos="mt-[114px]" />
            <Palette label="Tool Palettes - Plumbing" h="h-[283px]" pos="mt-[82px]" />
          </div>
          <div className="flex w-[1019px] shrink-0 flex-col pt-[5px]">
            <div className="w-[1018px] border-l border-t border-[#a3a2a3]"><Canvas /></div>
            <DrawingStatus />
            <div className="h-[2px] w-[1018px] bg-[#f0f0f0]" />
            <div className="mt-[4px] w-[1018px]"><Command /></div>
          </div>
          <div className="flex-1 pl-[3px] pt-[9px]">
            <Palette label="Project Navigator - Livgren" h="h-[564px]" pos="mt-[217px]" />
          </div>
        </div>
        <AppStatus />
        <div className="h-[2px] bg-[#222]" />
      </div>
    </div>
  );
}
